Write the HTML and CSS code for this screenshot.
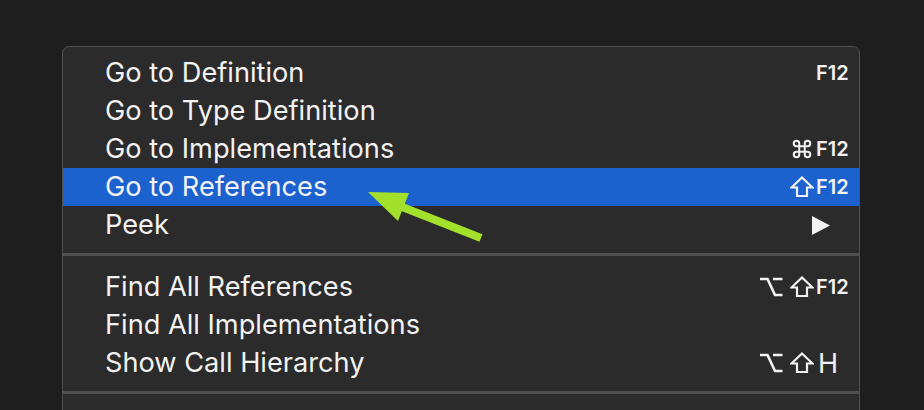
FILE: index.html
```html
<!DOCTYPE html>
<html lang="en">
<head>
<meta charset="utf-8">
<title>Context menu</title>
<link rel="stylesheet" href="styles.css">
</head>
<body>
<div class="stage">
  <div class="menu">
    <div class="item">
      <span class="label">Go to Definition</span>
      <span class="mods"></span>
      <span class="key small">F12</span>
    </div>
    <div class="item">
      <span class="label">Go to Type Definition</span>
    </div>
    <div class="item">
      <span class="label">Go to Implementations</span>
      <span class="mods">
        <svg class="glyph" viewBox="0 0 24 24"><path d="M15 6v12a3 3 0 1 0 3-3H6a3 3 0 1 0 3 3V6a3 3 0 1 0-3 3h12a3 3 0 1 0-3-3"/></svg>
      </span>
      <span class="key small">F12</span>
    </div>
    <div class="item active">
      <span class="label">Go to References</span>
      <span class="mods">
        <svg class="glyph" viewBox="0 0 24 22"><path d="M12 1.5 L22.5 11.5 H17 V20 H7 V11.5 H1.5 Z"/></svg>
      </span>
      <span class="key small">F12</span>
    </div>
    <div class="item">
      <span class="label">Peek</span>
      <span class="mods"></span>
      <span class="key">
        <svg class="tri" viewBox="0 0 18 19"><path d="M0 0 L18 9.5 L0 19 Z"/></svg>
      </span>
    </div>
    <div class="sep"></div>
    <div class="item">
      <span class="label">Find All References</span>
      <span class="mods">
        <svg class="glyph opt" viewBox="0 0 24 22"><path d="M1 3 H8.5 L16 19 H23.5 M14 3 H23.5"/></svg>
        <svg class="glyph" viewBox="0 0 24 22"><path d="M12 1.5 L22.5 11.5 H17 V20 H7 V11.5 H1.5 Z"/></svg>
      </span>
      <span class="key small">F12</span>
    </div>
    <div class="item">
      <span class="label">Find All Implementations</span>
    </div>
    <div class="item">
      <span class="label">Show Call Hierarchy</span>
      <span class="mods">
        <svg class="glyph opt" viewBox="0 0 24 22"><path d="M1 3 H8.5 L16 19 H23.5 M14 3 H23.5"/></svg>
        <svg class="glyph" viewBox="0 0 24 22"><path d="M12 1.5 L22.5 11.5 H17 V20 H7 V11.5 H1.5 Z"/></svg>
      </span>
      <span class="key big">H</span>
    </div>
    <div class="sep"></div>
    <div class="item">
      <span class="label">&nbsp;</span>
    </div>
  </div>
  <svg class="pointer" viewBox="0 0 924 410" width="924" height="410">
    <line x1="481" y1="238" x2="392" y2="203" />
    <path d="M368 192 L409 193 L398 221 Z" />
  </svg>
</div>
</body>
</html>
```

FILE: styles.css
```css
html, body {
  margin: 0;
  padding: 0;
  background: #1e1e1e;
  overflow: hidden;
}

.stage {
  position: relative;
  width: 924px;
  height: 410px;
  padding: 46px 0 0 62px;
  box-sizing: border-box;
}

.menu {
  width: 798px;
  box-sizing: border-box;
  background: #2b2b2b;
  border: 1px solid #505050;
  border-radius: 7px;
  padding: 7px 0 8px;
  font-family: Inter, "Noto Sans", sans-serif;
  color: #f2f2f2;
}

.item {
  display: flex;
  align-items: center;
  height: 38px;
  padding: 0 7px 0 42px;
}

.item.active {
  background: #1c62cf;
}

.label {
  flex: 1;
  font-size: 27.2px;
  line-height: 38px;
  white-space: nowrap;
}

.mods {
  display: flex;
  align-items: center;
  gap: 7px;
}

.key {
  width: 36px;
  padding-left: 2px;
  display: flex;
  align-items: center;
}

.key.small {
  font-size: 20px;
  font-weight: 600;
}

.key.big {
  font-size: 27px;
  font-weight: 400;
  padding-left: 4px;
  width: 34px;
}

.glyph {
  width: 24px;
  height: 22px;
  fill: none;
  stroke: #f2f2f2;
  stroke-width: 2.2;
  stroke-linejoin: miter;
}

.glyph.opt {
  stroke-width: 2.6;
}

.tri {
  width: 18px;
  height: 19px;
  fill: #f2f2f2;
  margin-left: -4px;
}

.sep {
  height: 3px;
  background: #4f4f4f;
  margin: 9px 0 12px;
}

.pointer {
  position: absolute;
  left: 0;
  top: 0;
  pointer-events: none;
}

.pointer line {
  stroke: #a3e02b;
  stroke-width: 8;
  stroke-linecap: butt;
}

.pointer path {
  fill: #a3e02b;
}
```
